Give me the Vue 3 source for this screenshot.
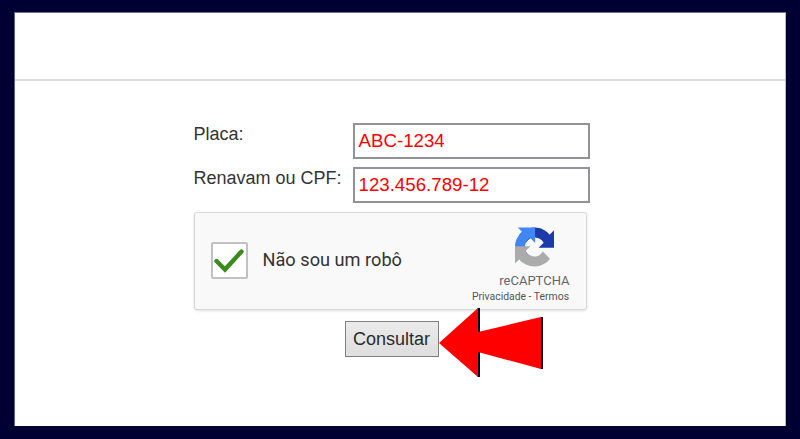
<script setup>
const fields = [
  { label: 'Placa:', value: 'ABC-1234' },
  { label: 'Renavam ou CPF:', value: '123.456.789-12' },
]
</script>

<template>
  <div class="frame">
    <main class="panel">
      <header class="header"></header>
      <section class="content">
        <div class="fields">
          <template v-for="f in fields" :key="f.label">
            <div class="label">{{ f.label }}</div>
            <div class="input">{{ f.value }}</div>
          </template>
        </div>

        <div class="captcha">
          <div class="check">
            <svg width="30" height="26" viewBox="0 0 30 26" aria-hidden="true">
              <path d="M2.5 13 L11 21.5 L27.5 3.5" fill="none" stroke="#3a8a1c" stroke-width="4.4" stroke-linecap="round" stroke-linejoin="miter" />
            </svg>
          </div>
          <div class="captcha-label">Não sou um robô</div>
          <div class="brand">
            <svg class="logo" width="39" height="40" viewBox="0 0 64 64" aria-hidden="true">
              <path d="M64 31.955l-.033-1.37V4.687l-7.16 7.16C50.948 4.674 42.033.093 32.05.093c-10.4 0-19.622 4.96-25.458 12.64l11.736 11.86a15.55 15.55 0 0 1 4.754-5.334c2.05-1.6 4.952-2.906 8.968-2.906.485 0 .86.057 1.135.163 5.808.458 10.843 3.664 13.81 8.316l-8.307 8.307c10.522-.04 22.408-.066 27.295.005" fill="#1c3aa9" />
              <path d="M31.9.002l-1.37.033H4.632l7.16 7.16C4.617 13.053.035 21.968.035 31.95c0 10.4 4.96 19.622 12.64 25.458l11.86-11.736a15.55 15.55 0 0 1-5.334-4.754c-1.6-2.05-2.906-4.952-2.906-8.968 0-.485.057-.86.163-1.135.458-5.808 3.664-10.843 8.316-13.81l8.307 8.307c-.04-10.522-.066-22.408.005-27.295" fill="#4285f4" />
              <path d="M.002 31.954l.033 1.37v25.9l7.16-7.16c5.86 7.173 14.775 11.754 24.757 11.754 10.4 0 19.622-4.96 25.458-12.64l-11.736-11.86a15.55 15.55 0 0 1-4.754 5.334c-2.05 1.6-4.952 2.906-8.968 2.906-.485 0-.86-.057-1.135-.163-5.808-.458-10.843-3.664-13.81-8.316l8.307-8.307c-10.522.04-22.408.066-27.295-.005" fill="#ababab" />
            </svg>
            <div class="brand-name">reCAPTCHA</div>
            <div class="brand-links">Privacidade - Termos</div>
          </div>
        </div>

        <div class="actions">
          <div class="button">Consultar</div>
          <svg class="arrow" width="108" height="72" viewBox="0 0 108 72" aria-hidden="true">
            <path d="M39.8 1 V25 M39.8 45 V70" stroke="#000033" stroke-width="2.4" fill="none" />
            <path d="M103 10 V62" stroke="#000033" stroke-width="2" fill="none" />
            <polygon points="0,36 39,1 39,25 102,10 102,62 39,45 39,70" fill="#ff0000" />
          </svg>
        </div>
      </section>
    </main>
  </div>
</template>

<style scoped>
.frame {
  box-sizing: border-box;
  width: 800px;
  height: 439px;
  padding: 12px 14px 13px;
  background: #000033;
  font-family: "Liberation Sans", Arial, sans-serif;
}
.panel {
  box-sizing: border-box;
  height: 100%;
  background: #fff;
  border-top: 1px solid #6f6f9c;
  border-left: 1px solid #5f5f96;
  border-right: 1px solid #b9b9c6;
}
.header {
  height: 66px;
  border-bottom: 2px solid #dcdcdc;
}
.content {
  padding: 42px 0 0 178.5px;
  width: 395px;
}
.fields {
  display: grid;
  grid-template-columns: 159px 237px;
  row-gap: 8px;
}
.label {
  margin-top: -1px;
  font-size: 18px;
  line-height: 24px;
  color: #333;
}
.input {
  box-sizing: border-box;
  height: 36px;
  padding-left: 4px;
  border: 2px solid #92929a;
  font-size: 18.7px;
  line-height: 32px;
  color: #ff0000;
  background: #fff;
}
.captcha {
  box-sizing: border-box;
  display: flex;
  align-items: center;
  width: 393px;
  height: 98px;
  margin-top: 9px;
  padding-left: 16px;
  border: 1px solid #d6d6d6;
  border-radius: 3px;
  background: #f9f9f9;
  box-shadow: 0 1px 3px rgba(0, 0, 0, 0.12);
}
.check {
  box-sizing: border-box;
  display: flex;
  align-items: center;
  justify-content: center;
  width: 37px;
  height: 37px;
  margin-top: -1px;
  border: 2px solid #c1c1c1;
  border-radius: 2px;
  background: #fff;
}
.captcha-label {
  margin: -3px 0 0 15px;
  font-family: Roboto, "Liberation Sans", sans-serif;
  font-size: 18.2px;
  color: #333;
}
.brand {
  display: flex;
  flex-direction: column;
  align-items: center;
  margin-left: auto;
  width: 98px;
  margin-right: 16px;
  margin-top: 8px;
  font-family: Roboto, "Liberation Sans", sans-serif;
  color: #555;
}
.logo {
  margin: 0 0 0 27px;
}
.brand-name {
  margin-top: 7px;
  align-self: flex-end;
  font-size: 13px;
  line-height: 14px;
  color: #666;
}
.brand-links {
  margin-top: 3px;
  font-size: 10.4px;
  line-height: 12px;
  white-space: nowrap;
}
.actions {
  position: relative;
  margin: 11px 0 0 151px;
  width: 94px;
}
.button {
  box-sizing: border-box;
  width: 94px;
  height: 36px;
  border: 1px solid #808080;
  background: linear-gradient(#ebebeb, #dedede);
  font-size: 18px;
  line-height: 34px;
  text-align: center;
  color: #2a2a2a;
}
.arrow {
  position: absolute;
  left: 94px;
  top: -14px;
}
</style>

<style>
body {
  margin: 0;
}
</style>
